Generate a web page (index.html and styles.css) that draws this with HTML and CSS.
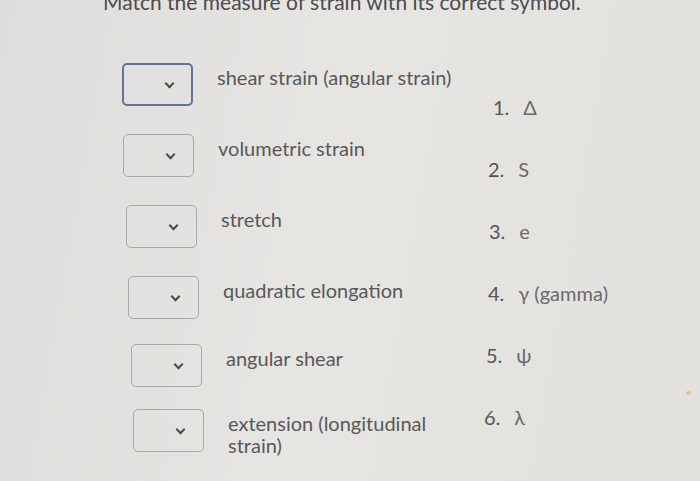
FILE: index.html
```html
<!DOCTYPE html>
<html lang="en">
<head>
    <meta charset="UTF-8">
    <meta name="viewport" content="width=device-width, initial-scale=1.0">
    <title>Matching question</title>
    <link rel="stylesheet" href="styles.css">
</head>
<body>

    <div class="question">
        <h1 class="prompt">Match the measure of strain with its correct symbol.</h1>

        <div class="match">
            <div class="answers">
                <div class="answer-row">
                    <div class="select focused"><span class="chevron"></span></div>
                    <div class="answer-label">shear strain (angular strain)</div>
                </div>
                <div class="answer-row">
                    <div class="select"><span class="chevron"></span></div>
                    <div class="answer-label">volumetric strain</div>
                </div>
                <div class="answer-row">
                    <div class="select"><span class="chevron"></span></div>
                    <div class="answer-label">stretch</div>
                </div>
                <div class="answer-row">
                    <div class="select"><span class="chevron"></span></div>
                    <div class="answer-label">quadratic elongation</div>
                </div>
                <div class="answer-row">
                    <div class="select"><span class="chevron"></span></div>
                    <div class="answer-label">angular shear</div>
                </div>
                <div class="answer-row">
                    <div class="select"><span class="chevron"></span></div>
                    <div class="answer-label">extension (longitudinal<br>strain)</div>
                </div>
            </div>

            <ol class="choices">
                <li><span class="num">1.</span><span class="sym">Δ</span></li>
                <li><span class="num">2.</span><span class="sym">S</span></li>
                <li><span class="num">3.</span><span class="sym">e</span></li>
                <li><span class="num">4.</span><span class="sym">γ (gamma)</span></li>
                <li><span class="num">5.</span><span class="sym">ψ</span></li>
                <li><span class="num">6.</span><span class="sym">λ</span></li>
            </ol>
        </div>
    </div>

    <span class="speck"></span>

</body>
</html>
```

FILE: styles.css
```css
    body {
        font-family: Lato, "Open Sans", sans-serif;
        background-color: #e3e2df;
        background-image: linear-gradient(100deg, #dedddb 0%, #e6e5e2 45%, #e2e1de 100%);
        color: #555;
        margin: 0;
        height: 481px;
        overflow: hidden;
        position: relative;
    }

    .question {
        padding-left: 103px;
    }
    .prompt {
        font-size: 21px;
        font-weight: normal;
        color: #4c4c4f;
        margin: -10px 0 0 0;
        line-height: 24px;
    }

    .match {
        display: flex;
        margin-top: 49px;
        padding-left: 19px;
    }
    .answers {
        width: 371px;
        display: flex;
        flex-direction: column;
        gap: 28px;
    }
    .answer-row {
        display: flex;
        align-items: flex-start;
        gap: 24px;
    }
    .answer-row:nth-child(2) { margin-left: 1px; }
    .answer-row:nth-child(3) { margin-left: 4px; }
    .answer-row:nth-child(4) { margin-left: 6px; }
    .answer-row:nth-child(5) { margin-left: 9px; margin-top: -3px; }
    .answer-row:nth-child(6) { margin-left: 11px; margin-top: -6px; }

    .select {
        width: 71px;
        height: 43px;
        box-sizing: border-box;
        border: 1px solid #a9a8a6;
        border-radius: 5px;
        display: flex;
        align-items: center;
        justify-content: center;
        padding-left: 24px;
        flex-shrink: 0;
    }
    .select.focused {
        border: 2px solid #66709c;
    }
    .chevron {
        width: 5px;
        height: 5px;
        border-right: 2px solid #4a4a55;
        border-bottom: 2px solid #4a4a55;
        transform: rotate(45deg);
        margin-top: -3px;
    }

    .answer-label {
        font-size: 20px;
        line-height: 22px;
        color: #58585a;
        padding-top: 3px;
    }

    .choices {
        list-style: none;
        margin: 33px 0 0 0;
        padding: 0;
        display: flex;
        flex-direction: column;
        gap: 40px;
        font-size: 20px;
        line-height: 22px;
    }
    .choices li {
        display: flex;
        gap: 14px;
    }
    .choices li:nth-child(2) { margin-left: -5px; }
    .choices li:nth-child(3) { margin-left: -4px; }
    .choices li:nth-child(4) { margin-left: -5px; }
    .choices li:nth-child(5) { margin-left: -7px; }
    .choices li:nth-child(6) { margin-left: -9px; }
    .num {
        color: #555;
    }
    .sym {
        color: #6a6a6c;
    }

    .speck {
        position: absolute;
        left: 686px;
        top: 391px;
        width: 5px;
        height: 4px;
        border-radius: 50%;
        background-color: #e9b98e;
    }
```
